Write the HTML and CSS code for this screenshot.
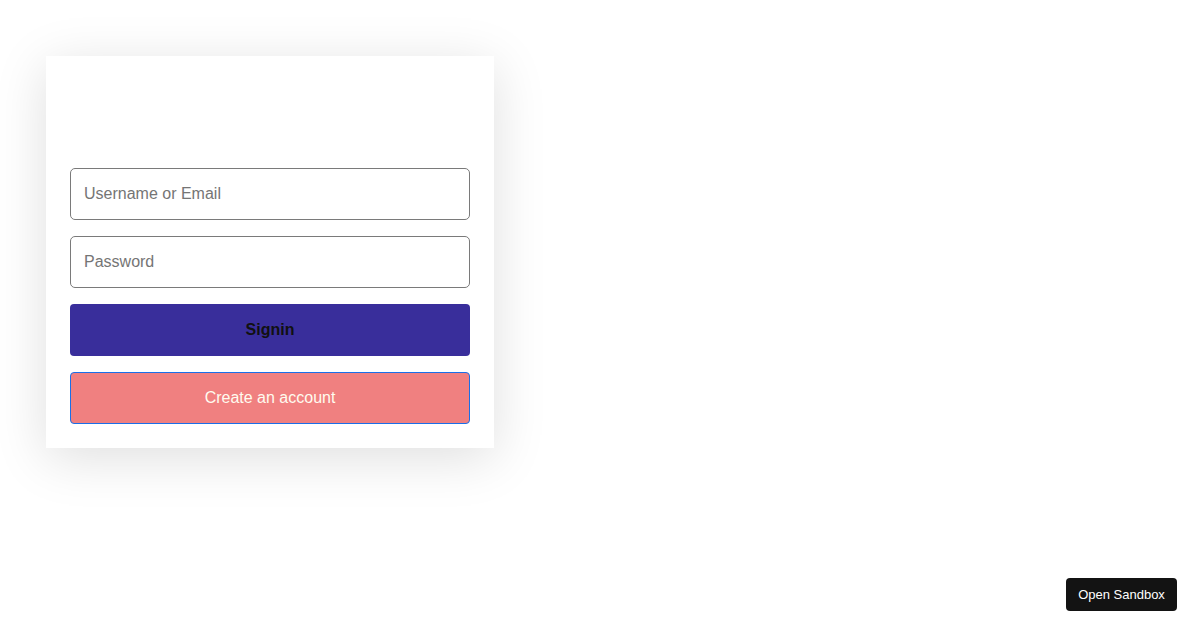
FILE: index.html
```html
<!DOCTYPE html>
<html>
<head>
<meta charset="utf-8">
<link rel="stylesheet" href="styles.css">
</head>
<body>
<div class="page">
  <form class="card">
    <div class="logo"></div>
    <input class="field" type="text" placeholder="Username or Email">
    <input class="field" type="password" placeholder="Password">
    <button type="button" class="btn signin">Signin</button>
    <button type="button" class="btn create">Create an account</button>
  </form>
</div>
<a class="sandbox">Open Sandbox</a>
</body>
</html>
```
FILE: styles.css
```css
html, body {
  margin: 0;
  padding: 0;
  background: #fff;
  font-family: "Liberation Sans", Arial, sans-serif;
}
body {
  min-height: 630px;
}
.page {
  padding: 56px 0 0 46px;
  min-height: 574px;
}
.card {
  width: 448px;
  box-sizing: border-box;
  padding: 24px;
  background: #fff;
  box-shadow: 0 10px 50px rgba(0, 0, 0, 0.13);
  display: flex;
  flex-direction: column;
  gap: 16px;
}
.logo {
  height: 72px;
}
.field {
  height: 52px;
  box-sizing: border-box;
  border: 1px solid #7a7a7a;
  border-radius: 5px;
  padding: 0 13px;
  font-family: "Liberation Sans", Arial, sans-serif;
  font-size: 16px;
  color: #222;
  outline: none;
}
.field::placeholder {
  color: #757575;
}
.btn {
  height: 52px;
  box-sizing: border-box;
  border-radius: 4px;
  font-family: "Liberation Sans", Arial, sans-serif;
  font-size: 16px;
  cursor: pointer;
}
.signin {
  background: #392e9b;
  border: none;
  color: #111;
  font-weight: bold;
}
.create {
  background: #f08080;
  border: 1px solid #1a6fe8;
  color: #fffbef;
}
.sandbox {
  position: fixed;
  right: 23px;
  bottom: 19px;
  width: 111px;
  height: 33px;
  box-sizing: border-box;
  display: flex;
  align-items: center;
  justify-content: center;
  background: #131313;
  color: #fff;
  border-radius: 4px;
  font-family: "Liberation Sans", Arial, sans-serif;
  font-size: 13px;
}
```
